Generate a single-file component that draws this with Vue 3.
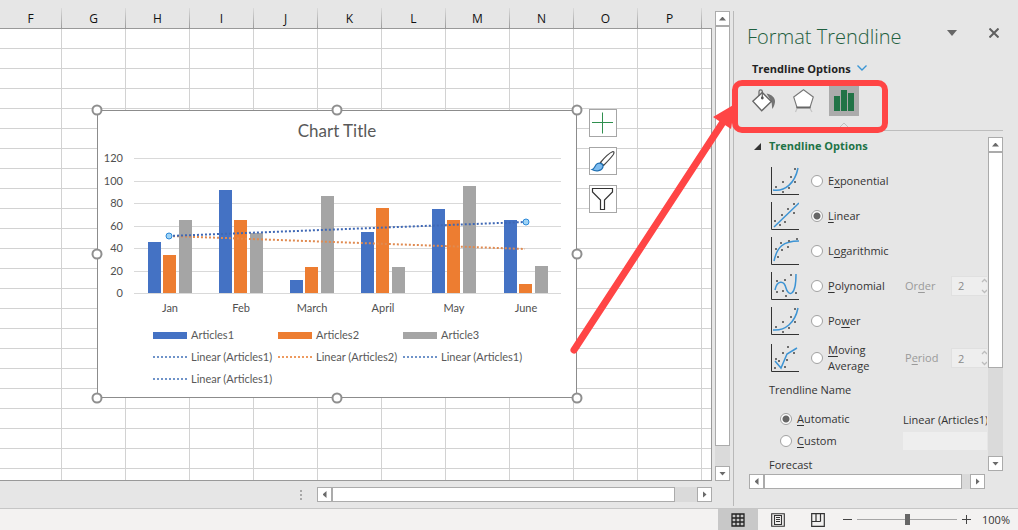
<script setup>
import { ref } from 'vue'

const columns = ['F', 'G', 'H', 'I', 'J', 'K', 'L', 'M', 'N', 'O', 'P']

const months = ['Jan', 'Feb', 'March', 'April', 'May', 'June']
const series = [
  { color: '#4472c4', values: [45, 92, 12, 54, 75, 65] },
  { color: '#ed7d31', values: [34, 65, 23, 76, 65, 8] },
  { color: '#a5a5a5', values: [65, 53, 86, 23, 95, 24] }
]
const ticks = [120, 100, 80, 60, 40, 20, 0]
const baseY = 147
const yOf = (v) => Math.round(baseY - (v * 135) / 120)
const centerOf = (i) => Math.round(72.5 + i * 71.2)
const barOffsets = [-22, -7, 9]

const legend = [
  { label: 'Articles1', kind: 'bar', tone: 'blue' },
  { label: 'Articles2', kind: 'bar', tone: 'orange' },
  { label: 'Article3', kind: 'bar', tone: 'gray' },
  { label: 'Linear (Articles1)', kind: 'dots', tone: 'blue' },
  { label: 'Linear (Articles2)', kind: 'dots', tone: 'orange' },
  { label: 'Linear (Articles1)', kind: 'dots', tone: 'blue' },
  { label: 'Linear (Articles1)', kind: 'dots', tone: 'blue' }
]

const handles = ['nw', 'n', 'ne', 'w', 'e', 'sw', 's', 'se']

const trend = ref('Linear')
const trendName = ref('auto')
const zoom = ref(50)

const types = [
  {
    id: 'Exponential', parts: ['E', 'x', 'ponential'],
    curve: 'M2 23C14 25 24 16 27 1',
    dots: [[24, 2], [20, 10], [24, 15], [12, 15], [18, 21], [5, 20], [12, 25]]
  },
  {
    id: 'Linear', parts: ['', 'L', 'inear'],
    curve: 'M3 25L28 1',
    dots: [[23, 2], [17, 7], [23, 11], [11, 13], [14, 20], [4, 19], [9, 23]]
  },
  {
    id: 'Logarithmic', parts: ['L', 'o', 'garithmic'],
    curve: 'M3 24C6 10 12 4 28 4',
    dots: [[26, 2], [18, 4], [10, 6], [17, 10], [5, 12], [11, 13], [7, 20]]
  },
  {
    id: 'Polynomial', parts: ['', 'P', 'olynomial'],
    curve: 'M4 18C6 8 13 8 15 16C17 24 25 26 25 2',
    dots: [[20, 3], [14, 8], [6, 9], [6, 20], [12, 19], [15, 24], [25, 21]],
    field: ['Or', 'd', 'er']
  },
  {
    id: 'Power', parts: ['Po', 'w', 'er'],
    curve: 'M2 23C14 24 24 16 27 1',
    dots: [[24, 2], [20, 10], [24, 15], [12, 15], [18, 21], [5, 20], [12, 25]]
  },
  {
    id: 'Moving', parts: ['', 'M', 'oving'], second: 'Average',
    curve: 'M4 17L10 24L16 10L26 4',
    dots: [[17, 3], [12, 9], [23, 9], [5, 15], [8, 17], [16, 16], [4, 24], [14, 23]],
    field: ['P', 'e', 'riod']
  }
]
</script>

<template>
  <div class="app">
    <main class="workspace">
      <section class="sheet">
        <div class="sheet-body">
          <div class="sheet-view">
            <div class="col-heads">
              <div v-for="c in columns" :key="c" class="col-head">{{ c }}</div>
              <div class="col-head"></div>
            </div>
            <div class="cells">
              <figure class="chart">
                <figcaption class="chart-title">Chart Title</figcaption>
                <svg class="plot" viewBox="0 0 480 178" role="img" aria-label="Articles per month">
                  <g v-for="t in ticks" :key="t">
                    <rect x="37" :y="yOf(t)" width="427" height="1" fill="#d9d9d9" />
                    <text class="tick" x="26" :y="yOf(t) + 4" text-anchor="end">{{ t }}</text>
                  </g>
                  <g v-for="(s, k) in series" :key="s.color" :fill="s.color">
                    <rect
                      v-for="(v, i) in s.values" :key="i"
                      :x="centerOf(i) + barOffsets[k]" :y="yOf(v)"
                      width="13" :height="baseY - yOf(v)"
                    />
                  </g>
                  <text
                    v-for="(m, i) in months" :key="m" class="tick"
                    :x="centerOf(i)" y="166" text-anchor="middle"
                  >{{ m }}</text>
                  <path d="M72 90L428 103" stroke="#e08a50" stroke-width="2" stroke-dasharray="2 2" />
                  <path d="M72 90L428 76" stroke="#3f68b5" stroke-width="2" stroke-dasharray="2 2" />
                  <circle cx="72" cy="90" r="3" class="endpoint" />
                  <circle cx="429" cy="76" r="3" class="endpoint" />
                </svg>
                <ul class="legend">
                  <li v-for="(l, i) in legend" :key="i">
                    <span :class="['swatch', l.kind, l.tone]"></span>{{ l.label }}
                  </li>
                </ul>
                <i v-for="h in handles" :key="h" :class="['handle', h]"></i>
                <div class="chart-tools">
                  <button type="button" aria-label="Chart Elements">
                    <svg viewBox="0 0 26 26"><path d="M12.500 2.500V23.500M2 12.500H23" stroke="#2f8f4e" /></svg>
                  </button>
                  <button type="button" aria-label="Chart Styles">
                    <svg viewBox="0 0 26 26">
                      <path d="M10.500 14.500C15 9 19 5 23 3.500C24.500 3.500 24 5.500 23 7C20 11 17 14 13.500 17.500Z" fill="#fff" stroke="#444" stroke-width="1.200" />
                      <path d="M2 21.500C5 21 4.500 17 7.500 15.500C10 14.200 13.500 16 13 18.800C12 23 6 24 2 21.500Z" fill="#7dbcf0" stroke="#1f6fb2" stroke-width="1.200" />
                    </svg>
                  </button>
                  <button type="button" aria-label="Chart Filters">
                    <svg viewBox="0 0 26 26"><path d="M2.500 2.500H22.500V6L14.500 14V23.500H10.500V14L2.500 6Z" fill="#fff" stroke="#333" stroke-width="1.200" /></svg>
                  </button>
                </div>
              </figure>
            </div>
          </div>
          <div class="scroll vertical sheet-scroll">
            <button type="button" class="up" aria-label="Scroll up"></button>
            <div class="thumb"></div>
            <button type="button" class="down" aria-label="Scroll down"></button>
          </div>
        </div>
        <div class="sheet-foot">
          <span class="grip"><i></i><i></i><i></i></span>
          <div class="scroll horizontal sheet-hscroll">
            <button type="button" class="left" aria-label="Scroll left"></button>
            <div class="thumb"></div>
            <button type="button" class="right" aria-label="Scroll right"></button>
          </div>
        </div>
      </section>

      <aside class="pane">
        <header class="pane-head">
          <h1>Format Trendline</h1>
          <button type="button" class="plain" aria-label="Pane options">
            <svg width="10" height="6" viewBox="0 0 10 6"><path d="M0 0H10L5 6Z" fill="#666" /></svg>
          </button>
          <button type="button" class="plain close" aria-label="Close">
            <svg width="10" height="10" viewBox="0 0 10 10"><path d="M0.500 0.500L9.500 9.500M9.500 0.500L0.500 9.500" stroke="#606060" stroke-width="2" /></svg>
          </button>
        </header>
        <button type="button" class="plain chooser">
          Trendline Options
          <svg width="10" height="6" viewBox="0 0 10 6"><path d="M0.500 0.500L5 5L9.500 0.500" fill="none" stroke="#3a96d6" stroke-width="1.400" /></svg>
        </button>
        <nav class="tabs">
          <button type="button" class="tab" aria-label="Fill and Line">
            <svg width="24" height="24" viewBox="0 0 24 24">
              <path d="M14.500 4.500C20 5.500 23.500 9 23 13C22.700 16 21.500 18 20.500 20C19.500 18 20.500 15 19 12Z" fill="#737373" />
              <path d="M0.800 12.200L10.300 3.500L19.300 12.500L9.700 21.800Z" fill="#fff" stroke="#666" stroke-width="1.400" />
              <path d="M7 7V2.500C7 0.300 10.300 0.300 10.300 2.500V9" fill="none" stroke="#666" stroke-width="1.200" />
              <circle cx="10.300" cy="9" r="1.400" fill="#555" />
            </svg>
          </button>
          <button type="button" class="tab" aria-label="Effects">
            <svg width="24" height="24" viewBox="0 0 24 24">
              <path d="M5 19.500L3.500 23M18 19.500L20 23" stroke="#c4c4c4" stroke-width="1.200" />
              <path d="M11.500 0.800L21.300 8L18 18.500H5L1.700 8Z" fill="#fff" stroke="#777" stroke-width="1.100" />
              <path d="M4.500 18.500H18.500" stroke="#666" stroke-width="2" />
            </svg>
          </button>
          <button type="button" class="tab selected" aria-label="Trendline Options">
            <svg width="30" height="31" viewBox="0 0 30 31">
              <path d="M5 11H11V26H5ZM12 5H18V26H12ZM19 8H25V26H19Z" fill="#217346" />
            </svg>
          </button>
        </nav>
        <div class="divider">
          <svg width="10" height="6" viewBox="0 0 10 6"><path d="M1 5L5 1L9 5" fill="none" stroke="#c0c0c0" /></svg>
        </div>

        <div class="pane-body">
          <div class="options">
            <h2>
              <svg width="7" height="7" viewBox="0 0 7 7"><path d="M7 0V7H0Z" fill="#333" /></svg>
              Trendline Options
            </h2>
            <div v-for="t in types" :key="t.id" :class="['option', { tall: t.second }]">
              <svg width="28" height="28" viewBox="0 0 28 28">
                <path d="M0.500 0V27.500H28" fill="none" stroke="#333" />
                <path :d="t.curve" fill="none" stroke="#3d94d4" stroke-width="1.500" />
                <rect v-for="(d, i) in t.dots" :key="i" :x="d[0] - 1" :y="d[1] - 1" width="2" height="2" fill="#6e6e6e" />
              </svg>
              <input :id="'type-' + t.id" v-model="trend" type="radio" name="trend" :value="t.id" />
              <label :for="'type-' + t.id">{{ t.parts[0] }}<u>{{ t.parts[1] }}</u>{{ t.parts[2] }}<span v-if="t.second" class="second">{{ t.second }}</span></label>
              <template v-if="t.field">
                <label class="dim" :for="'num-' + t.id">{{ t.field[0] }}<u>{{ t.field[1] }}</u>{{ t.field[2] }}</label>
                <span class="spinner">
                  <input :id="'num-' + t.id" type="text" value="2" disabled />
                  <svg width="7" height="16" viewBox="0 0 7 16"><path d="M1 4L3.500 1.500L6 4M1 12L3.500 14.500L6 12" fill="none" stroke="#bdbdbd" stroke-width="1.300" /></svg>
                </span>
              </template>
            </div>
            <h3>Trendline Name</h3>
            <div class="naming">
              <input id="name-auto" v-model="trendName" type="radio" name="tname" value="auto" />
              <label for="name-auto"><u>A</u>utomatic</label>
              <span class="auto-name">Linear (Articles1)</span>
            </div>
            <div class="naming">
              <input id="name-custom" v-model="trendName" type="radio" name="tname" value="custom" />
              <label for="name-custom"><u>C</u>ustom</label>
              <input class="custom-name" type="text" aria-label="Custom name" disabled />
            </div>
            <h3 class="forecast">Forecast</h3>
          </div>
          <div class="scroll vertical pane-scroll">
            <button type="button" class="up" aria-label="Scroll up"></button>
            <div class="thumb"></div>
            <button type="button" class="down" aria-label="Scroll down"></button>
          </div>
        </div>
        <div class="scroll horizontal pane-hscroll">
          <button type="button" class="left" aria-label="Scroll left"></button>
          <div class="thumb"></div>
          <button type="button" class="right" aria-label="Scroll right"></button>
        </div>
      </aside>
    </main>

    <footer class="status">
      <button type="button" class="view selected" aria-label="Normal view">
        <svg width="14" height="14" viewBox="0 0 14 14"><path d="M1 1H13V13H1ZM5 1V13M9 1V13M1 5H13M1 9H13" fill="none" stroke="#222" stroke-width="1.300" /></svg>
      </button>
      <button type="button" class="view" aria-label="Page layout">
        <svg width="14" height="14" viewBox="0 0 14 14"><path d="M0.700 0.700H13.300V13.300H0.700ZM3.500 2.500H10.500V11.500H3.500ZM5 4.500H9M5 6.500H9M5 8.500H9" fill="none" stroke="#333" stroke-width="1.100" /></svg>
      </button>
      <button type="button" class="view" aria-label="Page break preview">
        <svg width="14" height="14" viewBox="0 0 14 14"><path d="M0.700 0.700H13.300V13.300H0.700ZM5 1V8.500M9.500 1V8.500M1 8.500H9.500" fill="none" stroke="#333" stroke-width="1.200" /></svg>
      </button>
      <button type="button" class="step" aria-label="Zoom out">
        <svg width="9" height="9" viewBox="0 0 9 9"><path d="M0 4.500H9" stroke="#444" /></svg>
      </button>
      <input v-model="zoom" class="zoom" type="range" min="0" max="100" aria-label="Zoom" />
      <button type="button" class="step" aria-label="Zoom in">
        <svg width="9" height="9" viewBox="0 0 9 9"><path d="M0 4.500H9M4.500 0V9" stroke="#444" /></svg>
      </button>
      <span class="percent">100%</span>
    </footer>

    <svg class="callout" width="320" height="280" viewBox="0 0 320 280" aria-hidden="true">
      <rect x="166" y="8" width="150" height="47" rx="7" fill="none" stroke="#ff4545" stroke-width="6" />
      <path d="M5 275L156 44" stroke="#ff4545" stroke-width="7" stroke-linecap="round" />
      <path d="M166 29L144 42L162 54Z" fill="#ff4545" />
    </svg>
  </div>
</template>

<style>
body {
  margin: 0;
}
</style>

<style scoped>
.app {
  position: relative;
  display: flex;
  flex-direction: column;
  min-height: 100vh;
  overflow: hidden;
  background: #e6e6e6;
  color: #333;
  font-family: "Open Sans", "Noto Sans", sans-serif;
  font-size: 11px;
}
* {
  box-sizing: border-box;
}
button {
  padding: 0;
  border: 0;
  background: none;
  color: inherit;
  font: inherit;
}
svg {
  display: block;
  flex: none;
}
.workspace {
  display: flex;
  flex: 1;
}
.sheet {
  display: flex;
  flex: 1;
  flex-direction: column;
  min-width: 0;
}
.sheet-body {
  display: flex;
  flex: 1;
  gap: 3px;
  padding-right: 3px;
}
.sheet-view {
  display: flex;
  flex: 1;
  flex-direction: column;
  min-width: 0;
  overflow: hidden;
}
.col-heads {
  display: flex;
  height: 29px;
  padding-top: 8px;
  overflow: hidden;
  border-bottom: 1px solid #999;
}
.col-head {
  flex: none;
  width: 64px;
  border-right: 1px solid;
  border-image: linear-gradient(#dedede, #999) 1;
  color: #111;
  font-size: 12px;
  line-height: 21px;
  text-align: center;
}
.col-head:first-child {
  width: 62px;
}
.cells {
  position: relative;
  flex: 1;
  border-right: 1px solid #999;
  border-bottom: 1px solid #999;
  background-color: #fff;
  background-image:
    linear-gradient(to right, transparent 63px, #d2d2d2 63px),
    linear-gradient(to bottom, transparent 19px, #d2d2d2 19px);
  background-position: -2px 0, 0 0;
  background-size: 64px 20px;
}
.chart {
  position: absolute;
  top: 81px;
  left: 97px;
  width: 480px;
  height: 288px;
  margin: 0;
  outline: 1px solid #8c8c8c;
  outline-offset: -1px;
  background: #fff;
  color: #595959;
  font-family: Lato, sans-serif;
}
.chart-title {
  height: 36px;
  font-size: 17px;
  line-height: 42px;
  text-align: center;
}
.plot {
  width: 480px;
  height: 178px;
}
.tick {
  fill: #505050;
  font-size: 11px;
}
.endpoint {
  fill: #9fd3f5;
  stroke: #2b88d8;
}
.legend {
  display: grid;
  grid-template-columns: 125px 125px 125px;
  margin: 0 0 0 56px;
  padding: 0;
  list-style: none;
  font-size: 11px;
  line-height: 22px;
  white-space: nowrap;
}
.legend li {
  display: flex;
  align-items: center;
  gap: 4px;
}
.swatch {
  width: 34px;
}
.swatch.bar {
  height: 7px;
  background: currentColor;
}
.swatch.dots {
  border-top: 2px dotted;
}
.blue {
  color: #4472c4;
}
.orange {
  color: #ed7d31;
}
.gray {
  color: #a5a5a5;
}
.dots.blue {
  color: #6f93c9;
}
.dots.orange {
  color: #ee9a5f;
}
.handle {
  position: absolute;
  width: 11px;
  height: 11px;
  border: 2px solid #8f8f8f;
  border-radius: 50%;
  background: #fff;
  transform: translate(-50%, -50%);
}
.nw, .n, .ne { top: 0; }
.w, .e { top: 50%; }
.sw, .s, .se { top: 100%; }
.nw, .w, .sw { left: 0; }
.n, .s { left: 50%; }
.ne, .e, .se { left: 100%; }
.chart-tools {
  position: absolute;
  top: -1px;
  left: 492px;
  display: flex;
  flex-direction: column;
  gap: 10px;
}
.chart-tools button {
  width: 28px;
  height: 28px;
  border: 1px solid #a6a6a6;
  background: #fff;
}
.chart-tools svg {
  width: 26px;
  height: 26px;
  fill: none;
}
.scroll {
  display: flex;
  background: #dadada;
}
.scroll button {
  display: grid;
  flex: none;
  width: 15px;
  height: 15px;
  place-items: center;
  border: 1px solid #ababab;
  background: #fff;
}
.scroll button::before {
  width: 7px;
  height: 4px;
  background: #6a6a6a;
  content: "";
}
.scroll .left::before,
.scroll .right::before {
  width: 4px;
  height: 7px;
}
.up::before { clip-path: polygon(50% 0, 100% 100%, 0 100%); }
.down::before { clip-path: polygon(0 0, 100% 0, 50% 100%); }
.left::before { clip-path: polygon(0 50%, 100% 0, 100% 100%); }
.right::before { clip-path: polygon(0 0, 100% 50%, 0 100%); }
.thumb {
  flex: 1;
  border: 1px solid #ababab;
  background: #fff;
}
.vertical {
  flex-direction: column;
  width: 15px;
}
.sheet-scroll {
  margin-top: 11px;
}
.sheet-scroll .thumb {
  margin-bottom: 20px;
}
.sheet-foot {
  display: flex;
  align-items: center;
  justify-content: flex-end;
  gap: 15px;
  height: 27px;
  padding-right: 21px;
}
.grip {
  display: grid;
  gap: 2px;
}
.grip i {
  width: 2px;
  height: 2px;
  background: #a8a8a8;
}
.sheet-hscroll {
  width: 395px;
}
.sheet-hscroll .thumb {
  margin-right: 22px;
}
.pane {
  display: flex;
  flex: none;
  flex-direction: column;
  width: 285px;
  margin: 11px 0 2px;
  padding: 0 15px 17px 15px;
  border-left: 1px solid #b9b9b9;
}
.pane-head {
  display: flex;
  align-items: center;
  height: 44px;
  padding-right: 4px;
}
h1 {
  flex: 1;
  margin: 0 0 0 -2px;
  padding-top: 6px;
  color: #1f6040;
  font-size: 20px;
  font-weight: 300;
  line-height: 43px;
}
.close {
  margin-left: 32px;
}
.chooser {
  display: flex;
  align-items: center;
  gap: 6px;
  height: 26px;
  padding-left: 3px;
  color: #222;
  font-weight: 700;
}
.tabs {
  display: flex;
  align-items: center;
  gap: 10px;
  margin-top: 4px;
}
.tab {
  display: grid;
  width: 30px;
  height: 31px;
  place-items: center;
}
.tab.selected {
  background: #ababab;
}
.divider {
  height: 15px;
  padding: 6px 0 0 90px;
  border-bottom: 1px solid #bdbdbd;
}
.pane-body {
  display: flex;
  flex: 1;
  gap: 1px;
  margin-top: 6px;
}
.options {
  flex: 1;
  min-width: 0;
  overflow: hidden;
}
h2 {
  display: flex;
  align-items: center;
  gap: 8px;
  margin: 0;
  padding: 0 0 8px 5px;
  color: #217346;
  font-size: 11px;
  line-height: 18px;
}
.option {
  display: grid;
  grid-template-columns: 40px 17px 77px 46px 38px;
  align-items: center;
  height: 35px;
  padding-left: 22px;
}
.option.tall {
  height: 40px;
}
.second {
  display: block;
}
input[type="radio"] {
  width: 12px;
  height: 12px;
  margin: 0;
  border: 1px solid #a2a2a2;
  border-radius: 50%;
  appearance: none;
  background: #fff;
}
input[type="radio"]:checked {
  background: radial-gradient(circle, #666 3px, #fff 4px);
}
label {
  line-height: 16px;
}
u {
  text-underline-offset: 2px;
}
.dim {
  color: #9a9a9a;
}
.spinner {
  display: flex;
  align-items: center;
  height: 20px;
  border: 1px solid #e0e0e0;
  background: #eee;
}
.spinner input {
  width: 29px;
  padding: 0 0 0 6px;
  border: 0;
  background: none;
  color: #8a8a8a;
  font: inherit;
}
h3 {
  margin: 0;
  padding-left: 20px;
  font-size: 11px;
  font-weight: 400;
  line-height: 24px;
}
.naming {
  display: grid;
  grid-template-columns: 17px 106px 100px;
  align-items: center;
  height: 22px;
  padding-left: 31px;
}
h3 + .naming {
  margin-top: 6px;
}
.auto-name {
  white-space: nowrap;
}
.custom-name {
  width: 100px;
  height: 18px;
  border: 0;
  background: #eee;
}
.forecast {
  height: 20px;
  line-height: 26px;
}
.pane-scroll {
  margin-bottom: 3px;
}
.pane-scroll .thumb {
  margin-bottom: 88px;
}
.pane-hscroll {
  margin-right: 18px;
}
.pane-hscroll .thumb {
  margin-right: 8px;
}
.status {
  display: flex;
  flex: none;
  align-items: center;
  justify-content: flex-end;
  height: 22px;
  padding-right: 8px;
  border-top: 1px solid #c6c6c6;
  background: #f3f2f1;
}
.view {
  display: grid;
  width: 40px;
  height: 21px;
  place-items: center;
}
.view.selected {
  background: #c8c8c8;
}
.step {
  margin: 0 5px;
}
.zoom {
  width: 100px;
  height: 12px;
  margin: 0;
  appearance: none;
  background: linear-gradient(#a6a6a6, #a6a6a6) center / 100% 1px no-repeat;
}
.zoom::-webkit-slider-thumb {
  width: 5px;
  height: 11px;
  appearance: none;
  background: #666;
}
.percent {
  width: 29px;
  margin-left: 5px;
  text-align: right;
}
.callout {
  position: absolute;
  top: 75px;
  right: 129px;
  pointer-events: none;
}
</style>
